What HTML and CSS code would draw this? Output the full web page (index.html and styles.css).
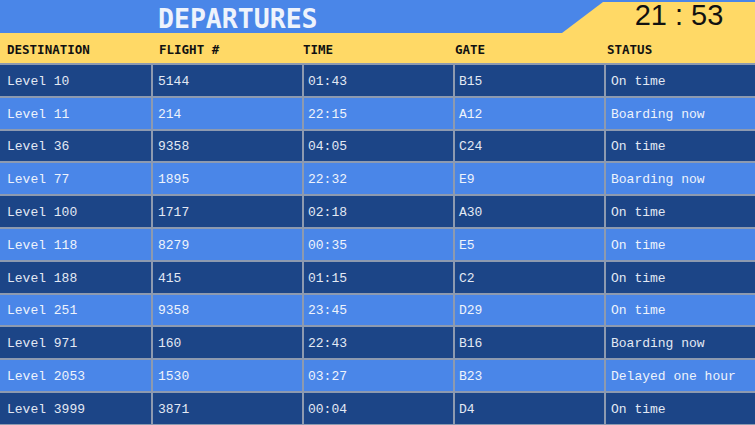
FILE: index.html
```html
<!DOCTYPE html>
<html>
<head>
<meta charset="utf-8">
<link rel="stylesheet" href="styles.css">
</head>
<body>
<div class="topbar">
  <h1 class="title">DEPARTURES</h1>
  <div class="clock-tab"><span class="clock">21 : 53</span></div>
</div>
<div class="board">
  <div class="cell head">DESTINATION</div><div class="cell head">FLIGHT #</div><div class="cell head">TIME</div><div class="cell head">GATE</div><div class="cell head">STATUS</div>
  <div class="cell dark">Level 10</div><div class="cell dark">5144</div><div class="cell dark">01:43</div><div class="cell dark">B15</div><div class="cell dark">On time</div>
  <div class="cell light">Level 11</div><div class="cell light">214</div><div class="cell light">22:15</div><div class="cell light">A12</div><div class="cell light">Boarding now</div>
  <div class="cell dark">Level 36</div><div class="cell dark">9358</div><div class="cell dark">04:05</div><div class="cell dark">C24</div><div class="cell dark">On time</div>
  <div class="cell light">Level 77</div><div class="cell light">1895</div><div class="cell light">22:32</div><div class="cell light">E9</div><div class="cell light">Boarding now</div>
  <div class="cell dark">Level 100</div><div class="cell dark">1717</div><div class="cell dark">02:18</div><div class="cell dark">A30</div><div class="cell dark">On time</div>
  <div class="cell light">Level 118</div><div class="cell light">8279</div><div class="cell light">00:35</div><div class="cell light">E5</div><div class="cell light">On time</div>
  <div class="cell dark">Level 188</div><div class="cell dark">415</div><div class="cell dark">01:15</div><div class="cell dark">C2</div><div class="cell dark">On time</div>
  <div class="cell light">Level 251</div><div class="cell light">9358</div><div class="cell light">23:45</div><div class="cell light">D29</div><div class="cell light">On time</div>
  <div class="cell dark">Level 971</div><div class="cell dark">160</div><div class="cell dark">22:43</div><div class="cell dark">B16</div><div class="cell dark">Boarding now</div>
  <div class="cell light">Level 2053</div><div class="cell light">1530</div><div class="cell light">03:27</div><div class="cell light">B23</div><div class="cell light">Delayed one hour</div>
  <div class="cell dark">Level 3999</div><div class="cell dark">3871</div><div class="cell dark">00:04</div><div class="cell dark">D4</div><div class="cell dark">On time</div>
</div>
</body>
</html>
```
FILE: styles.css
```css
html, body {
  margin: 0;
  padding: 0;
}
body {
  width: 755px;
  height: 425px;
  overflow: hidden;
  background: #8d9ab0;
}
.topbar {
  display: flex;
  align-items: flex-end;
  height: 33px;
  background: #4a86e8;
}
.title {
  margin: 0;
  padding-left: 158px;
  padding-top: 4px;
  align-self: flex-start;
  font-family: "DejaVu Sans Mono", monospace;
  font-weight: bold;
  font-size: 26.5px;
  line-height: 29px;
  color: #eef3fc;
}
.clock-tab {
  margin-left: auto;
  width: 193px;
  height: 31px;
  background: #ffd966;
  clip-path: polygon(0 100%, 41px 0, 100% 0, 100% 100%);
  padding-left: 41px;
  box-sizing: border-box;
  display: flex;
  justify-content: center;
  align-items: flex-start;
}
.clock {
  font-family: "Liberation Sans", Arial, sans-serif;
  font-size: 29px;
  line-height: 29px;
  color: #111;
  margin-top: -1px;
}
.board {
  display: grid;
  grid-template-columns: 151px 149px 149px 149px 149px;
  grid-template-rows: 30px repeat(11, 30.8px);
  column-gap: 2px;
  row-gap: 2px;
}
.cell {
  display: flex;
  align-items: center;
  padding-left: 4px;
  padding-top: 2px;
  font-family: "Liberation Mono", monospace;
  font-size: 13px;
  white-space: nowrap;
}
.cell:nth-child(5n+1) {
  padding-left: 7px;
}
.cell:nth-child(5n+2),
.cell:nth-child(5n) {
  padding-left: 5px;
}
.head {
  background: #ffd966;
  color: #111;
  font-family: "DejaVu Sans Mono", monospace;
  font-weight: bold;
  font-size: 12.5px;
  margin-right: -2px;
}
.board .head:nth-child(1) { padding-left: 7px; }
.board .head:nth-child(2) { padding-left: 6px; }
.board .head:nth-child(3) { padding-left: 0; text-indent: -1px; }
.board .head:nth-child(4) { padding-left: 0; }
.board .head:nth-child(5) { padding-left: 1px; margin-right: 0; }
.dark {
  background: #1c4587;
  color: #e3e9f4;
}
.light {
  background: #4a86e8;
  color: #eef3fc;
}
```
